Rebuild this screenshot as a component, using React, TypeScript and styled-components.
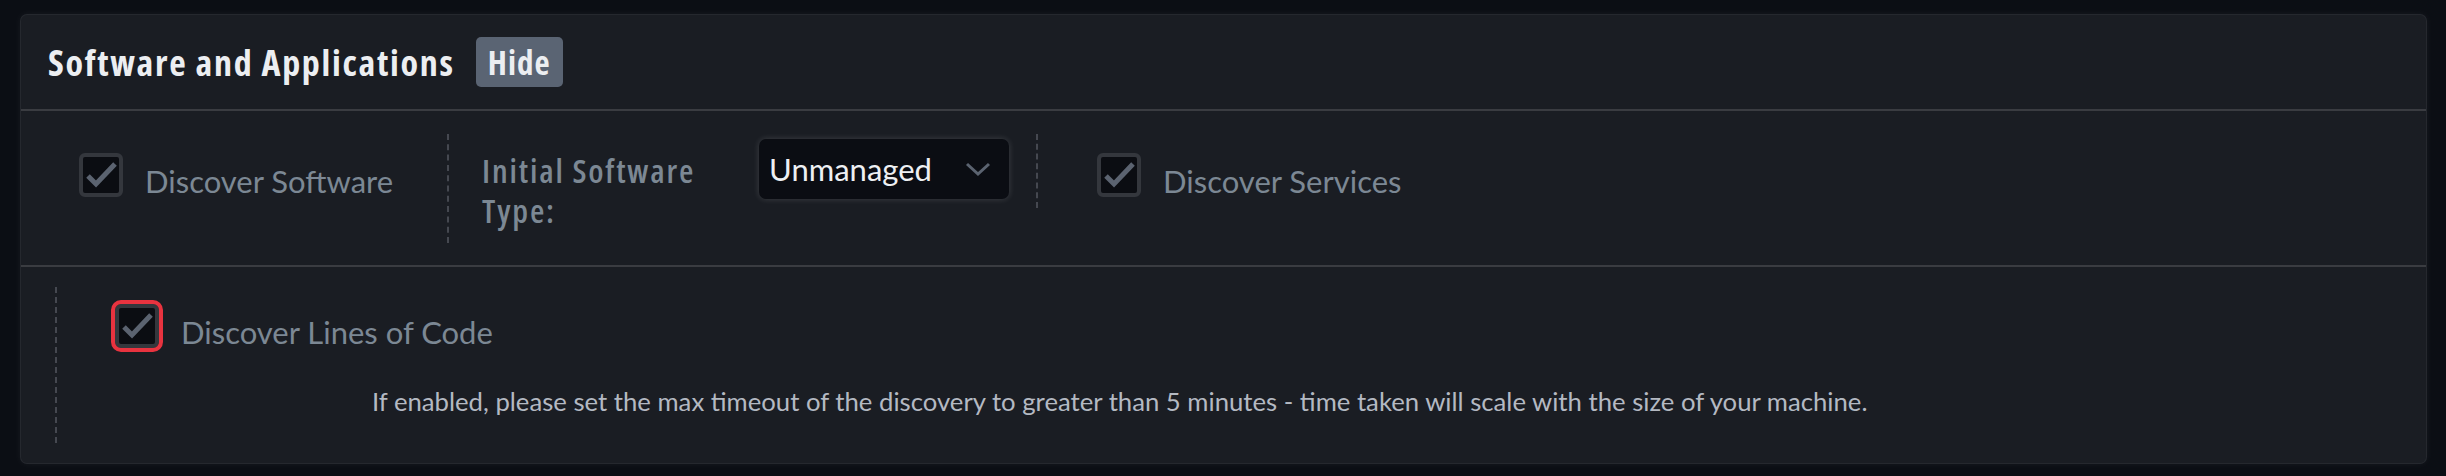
import React from "react";
import styled, { createGlobalStyle } from "styled-components";

const GlobalStyle = createGlobalStyle`
  html, body {
    margin: 0;
    padding: 0;
    background: #0b0e14;
  }
  body {
    font-family: Lato, "Open Sans", sans-serif;
  }
`;

const Page = styled.div`
  padding: 15px 20px 13px 21px;
  min-height: 448px;
`;

const Card = styled.section`
  background: #1a1d23;
  border-radius: 6px;
  box-shadow: 0 0 0 1px #25282e, 0 0 8px rgba(255, 255, 255, 0.07);
  height: 448px;
  display: flex;
  flex-direction: column;
  overflow: hidden;
`;

const Header = styled.header`
  height: 96px;
  display: flex;
  align-items: center;
  gap: 21px;
  padding-left: 27px;
  border-bottom: 2px solid #3a3c41;
  box-sizing: border-box;
  flex: none;
`;

const Title = styled.h2`
  margin: 0;
  font-family: "Open Sans", Roboto, sans-serif;
  font-stretch: 75%;
  font-weight: 700;
  font-size: 36px;
  color: #eceef1;
  letter-spacing: 1.7px;
`;

const Badge = styled.button`
  border: 0;
  border-radius: 5px;
  background: #5a6473;
  color: #eceef1;
  height: 50px;
  width: 87px;
  font-family: "Open Sans", Roboto, sans-serif;
  font-stretch: 75%;
  font-weight: 700;
  font-size: 33px;
  letter-spacing: 1px;
  padding: 0;
  cursor: pointer;
`;

const OptionsRow = styled.div`
  height: 156px;
  display: flex;
  align-items: flex-start;
  padding-top: 23px;
  border-bottom: 2px solid #3a3c41;
  box-sizing: border-box;
  flex: none;
`;

const Column = styled.div<{ $pl: number; $pr: number; $h: number; $dashed?: boolean }>`
  display: flex;
  align-items: flex-start;
  height: ${(p) => p.$h}px;
  padding-left: ${(p) => p.$pl}px;
  padding-right: ${(p) => p.$pr}px;
  border-left: ${(p) => (p.$dashed ? "2px dashed #454850" : "none")};
  box-sizing: border-box;
`;

const CheckField = styled.label<{ $top: number }>`
  display: flex;
  align-items: center;
  gap: 22px;
  margin-top: ${(p) => p.$top}px;
  cursor: pointer;
`;

const Box = styled.span<{ $highlight?: boolean }>`
  width: 44px;
  height: 44px;
  box-sizing: border-box;
  border: 4px solid #34373d;
  border-radius: 6px;
  background: #0b0d12;
  display: inline-flex;
  flex: none;
  outline: ${(p) => (p.$highlight ? "4px solid #e8333f" : "none")};
  outline-offset: 0;
  position: relative;
  svg {
    position: absolute;
    left: -4px;
    top: -4px;
  }
`;

const CheckText = styled.span`
  font-family: Lato, "Open Sans", sans-serif;
  font-size: 31px;
  color: #7c8894;
  white-space: nowrap;
  margin-top: 12px;
`;

const FieldLabel = styled.div`
  font-family: "Open Sans", Roboto, sans-serif;
  font-stretch: 75%;
  font-weight: 600;
  font-size: 33px;
  letter-spacing: 1.8px;
  line-height: 40px;
  color: #7c8894;
  width: 225px;
  margin-top: 17px;
`;

const Select = styled.div`
  margin-left: 52px;
  margin-top: 5px;
  width: 250px;
  height: 60px;
  box-sizing: border-box;
  background: #0b0d13;
  border-radius: 7px;
  box-shadow: 0 0 6px rgba(255, 255, 255, 0.16);
  display: flex;
  align-items: center;
  justify-content: space-between;
  padding: 0 18px 0 10px;
  font-family: Lato, "Open Sans", sans-serif;
  font-size: 31px;
  color: #eef0f3;
`;

const Section = styled.div`
  flex: 1;
  padding: 20px 0 20px 34px;
  display: flex;
`;

const Inner = styled.div`
  border-left: 2px dashed #454850;
  padding-left: 58px;
  padding-top: 14px;
  flex: 1;
  display: flex;
  flex-direction: column;
`;

const Help = styled.p`
  margin: 35px 0 0 257px;
  font-family: Lato, "Open Sans", sans-serif;
  font-size: 25.7px;
  color: #b4b9c2;
  white-space: nowrap;
`;

const Check = () => (
  <svg width="44" height="44" viewBox="0 0 44 44">
    <path d="M9 23 L17 31 L36 11" fill="none" stroke="#5b6370" strokeWidth="5" />
  </svg>
);

const Chevron = () => (
  <svg width="26" height="16" viewBox="0 0 26 16">
    <path d="M2 3 L13 13 L24 3" fill="none" stroke="#5b6370" strokeWidth="3" />
  </svg>
);

export default function App() {
  return (
    <>
      <GlobalStyle />
      <Page>
        <Card>
          <Header>
            <Title>Software and Applications</Title>
            <Badge>Hide</Badge>
          </Header>
          <OptionsRow>
            <Column $pl={58} $pr={54} $h={109}>
              <CheckField $top={16}>
                <Box>
                  <Check />
                </Box>
                <CheckText>Discover Software</CheckText>
              </CheckField>
            </Column>
            <Column $pl={33} $pr={27} $h={109} $dashed>
              <FieldLabel>Initial Software Type:</FieldLabel>
              <Select>
                <span>Unmanaged</span>
                <Chevron />
              </Select>
            </Column>
            <Column $pl={59} $pr={0} $h={74} $dashed>
              <CheckField $top={16}>
                <Box>
                  <Check />
                </Box>
                <CheckText>Discover Services</CheckText>
              </CheckField>
            </Column>
          </OptionsRow>
          <Section>
            <Inner>
              <CheckField $top={0}>
                <Box $highlight>
                  <Check />
                </Box>
                <CheckText>Discover Lines of Code</CheckText>
              </CheckField>
              <Help>
                If enabled, please set the max timeout of the discovery to greater than 5 minutes - time taken
                will scale with the size of your machine.
              </Help>
            </Inner>
          </Section>
        </Card>
      </Page>
    </>
  );
}
